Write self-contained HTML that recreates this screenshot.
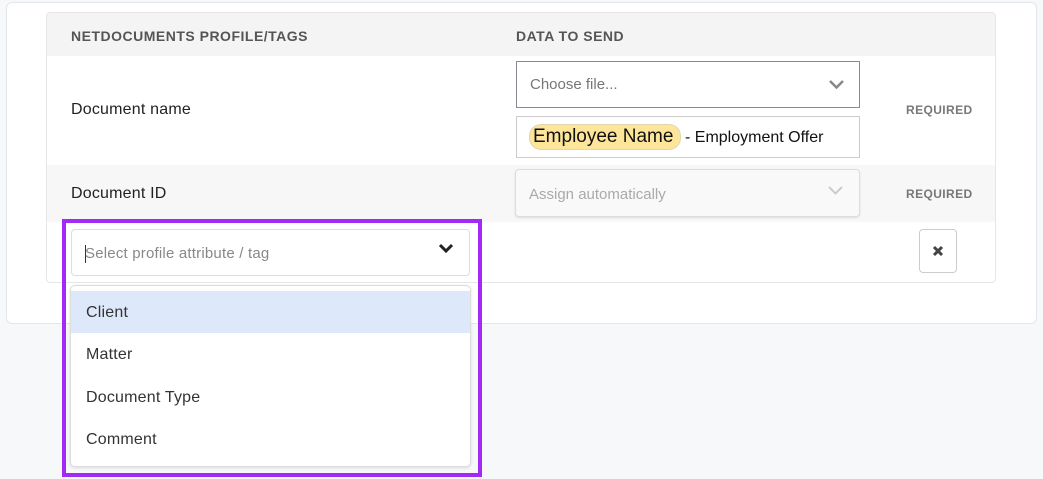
<!DOCTYPE html><html><head><style>
*{box-sizing:border-box;margin:0;padding:0}
body{width:1043px;height:479px;background:#f7f8fa;font-family:"Liberation Sans",sans-serif;position:relative;overflow:hidden;color:#222}
.a{position:absolute}
.card{left:6px;top:2px;width:1031px;height:322px;background:#fff;border:1px solid #e3e6ea;border-radius:6px}
.tbl{left:46px;top:12px;width:950px;height:271px;border:1px solid #e6e6e6;border-radius:4px;background:#fff;overflow:hidden}
.h{font-size:14px;font-weight:bold;color:#555;letter-spacing:.5px}
.req{font-size:12px;font-weight:bold;color:#777;letter-spacing:.4px}
.lbl{font-size:16px;color:#222;letter-spacing:.2px}
</style></head><body>
<div class="a card"></div>
<div class="a tbl">
 <div class="a" style="left:0;top:0;width:950px;height:43px;background:#f4f4f4"></div>
 <div class="a" style="left:0;top:152px;width:950px;height:57px;background:#f7f7f7"></div>
</div>
<div class="a h" style="left:71px;top:28px">NETDOCUMENTS PROFILE/TAGS</div>
<div class="a h" style="left:516px;top:28px">DATA TO SEND</div>
<div class="a lbl" style="left:71px;top:101px">Document name</div>
<div class="a lbl" style="left:71px;top:185px">Document ID</div>
<div class="a" style="left:516px;top:61px;width:344px;height:47px;border:1px solid #888a94;background:#fff"></div>
<div class="a" style="left:530px;top:76px;font-size:15px;color:#777">Choose file...</div>
<svg class="a" style="left:828px;top:79px" width="17" height="11"><path d="M2 2l6.5 6.5L15 2" stroke="#888" stroke-width="2.5" fill="none"/></svg>
<div class="a" style="left:516px;top:116px;width:344px;height:42px;border:1px solid #ccc;background:#fff"></div>
<div class="a" style="left:529px;top:124px;height:26px;width:152px;background:#fde59a;border-radius:12px;border:1px solid #e0d7b0"></div>
<div class="a" style="left:533px;top:126px;font-size:19px;color:#111">Employee Name</div>
<div class="a" style="left:685px;top:129px;font-size:16px;color:#111">- Employment Offer</div>
<div class="a req" style="left:906px;top:103px">REQUIRED</div>
<div class="a" style="left:515px;top:169px;width:345px;height:48px;border:1px solid #ddd;border-radius:4px;background:#f9f9f9;box-shadow:0 1px 2px rgba(0,0,0,.1)"></div>
<div class="a" style="left:529px;top:186px;font-size:15px;color:#aaa">Assign automatically</div>
<svg class="a" style="left:827px;top:185px" width="17" height="11"><path d="M2 2l6.5 6.5L15 2" stroke="#ccc" stroke-width="2" fill="none"/></svg>
<div class="a req" style="left:906px;top:187px">REQUIRED</div>
<div class="a" style="left:919px;top:229px;width:38px;height:44px;border:1px solid #ccc;border-radius:4px;background:#fff"></div>
<svg class="a" style="left:932px;top:245px" width="12" height="12"><path d="M2 2l8 8M10 2l-8 8" stroke="#444" stroke-width="3"/></svg>
<div class="a" style="left:62px;top:219px;width:420px;height:258px;border:4px solid #a22af5"></div>
<div class="a" style="left:71px;top:229px;width:399px;height:47px;border:1px solid #ddd;border-radius:4px;background:#fff"></div>
<div class="a" style="left:85px;top:245px;width:1px;height:18px;background:#333"></div>
<div class="a" style="left:85px;top:245px;font-size:15px;color:#888;letter-spacing:.2px">Select profile attribute / tag</div>
<svg class="a" style="left:438px;top:243px" width="16" height="11"><path d="M2 2l6 6 6-6" stroke="#222" stroke-width="3" fill="none"/></svg>
<div class="a" style="left:70px;top:285px;width:401px;height:182px;border:1px solid #ddd;border-radius:5px;background:#fff;box-shadow:0 1px 3px rgba(0,0,0,.12);overflow:hidden">
 <div class="a" style="left:0;top:5px;width:401px;height:42px;background:#dde9fb"></div>
 <div class="a lbl" style="left:15px;top:18px;color:#333">Client</div>
 <div class="a lbl" style="left:15px;top:60px;color:#333">Matter</div>
 <div class="a lbl" style="left:15px;top:103px;color:#333">Document Type</div>
 <div class="a lbl" style="left:15px;top:145px;color:#333">Comment</div>
</div>
</body></html>
